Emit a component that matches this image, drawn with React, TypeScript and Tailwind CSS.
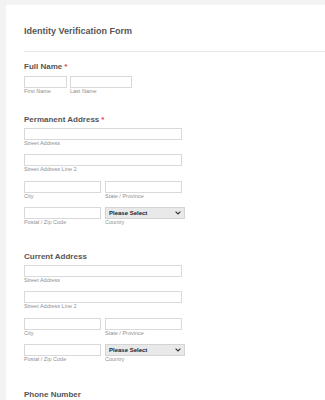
const font = { fontFamily: '"Liberation Sans", Arial, sans-serif' };

function Input({ w }: { w: string }) {
  return <div className={`${w} h-[12px] border border-[#d9d9d9] bg-white`} />;
}

function Sub({ children }: { children: React.ReactNode }) {
  return <div className="text-[5.5px] leading-[7px] text-[#8f8f8f]">{children}</div>;
}

function CountrySelect() {
  return (
    <div className="w-[80px] h-[12px] border border-[#d4d4d4] bg-[#e9e9e9] flex items-center justify-between pl-[3px] pr-[3px]">
      <span className="text-[6px] leading-[8px] text-[#222] font-bold">Please Select</span>
      <svg width="6" height="4" viewBox="0 0 6 4">
        <path d="M0.6 0.6 L3 3 L5.4 0.6" fill="none" stroke="#333" strokeWidth="1.1" />
      </svg>
    </div>
  );
}

function Address({ title, required }: { title: string; required?: boolean }) {
  return (
    <div className="flex flex-col">
      <div className="text-[8px] leading-[10px] font-bold text-[#555] mb-[3px]">
        {title}
        {required && <span className="text-[#e0403e] ml-[2px]">*</span>}
      </div>
      <Input w="w-[158px]" />
      <Sub>Street Address</Sub>
      <div className="mt-[7px]">
        <Input w="w-[158px]" />
        <Sub>Street Address Line 2</Sub>
      </div>
      <div className="mt-[8px] flex gap-[4px]">
        <div>
          <Input w="w-[77px]" />
          <Sub>City</Sub>
        </div>
        <div>
          <Input w="w-[77px]" />
          <Sub>State / Province</Sub>
        </div>
      </div>
      <div className="mt-[7px] flex gap-[4px]">
        <div>
          <Input w="w-[77px]" />
          <Sub>Postal / Zip Code</Sub>
        </div>
        <div>
          <CountrySelect />
          <div className="text-[5.5px] leading-[6px] text-[#8f8f8f]">Country</div>
        </div>
      </div>
    </div>
  );
}

export default function App() {
  return (
    <div className="min-h-screen bg-[#f3f3f3] pt-[5px] pl-[6px] overflow-hidden" style={font}>
      <div className="bg-white min-h-[400px] pt-[20px] pl-[18px]">
        <h1 className="text-[9px] leading-[12px] font-bold text-[#555]">Identity Verification Form</h1>
        <div className="mt-[14px] border-t border-[#e8e8e8]" />

        <div className="mt-[10px]">
          <div className="text-[8px] leading-[10px] font-bold text-[#555] mb-[4px]">
            Full Name<span className="text-[#e0403e] ml-[2px]">*</span>
          </div>
          <div className="flex gap-[3px]">
            <div>
              <Input w="w-[43px]" />
              <Sub>First Name</Sub>
            </div>
            <div>
              <Input w="w-[62px]" />
              <Sub>Last Name</Sub>
            </div>
          </div>
        </div>

        <div className="mt-[20px]">
          <Address title="Permanent Address" required />
        </div>

        <div className="mt-[26px]">
          <Address title="Current Address" />
        </div>

        <div className="mt-[27px] text-[8px] leading-[10px] font-bold text-[#555]">Phone Number</div>
      </div>
    </div>
  );
}
